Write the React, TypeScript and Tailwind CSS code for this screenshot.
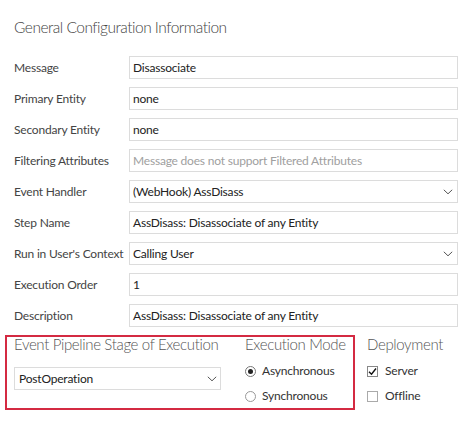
import React from "react";

const Chevron = () => (
  <svg width="10" height="6" viewBox="0 0 10 6" className="shrink-0">
    <path d="M0.8 0.8 L5 4.8 L9.2 0.8" fill="none" stroke="#555" strokeWidth="1" />
  </svg>
);

type Row = { label: string; value: string; select?: boolean; placeholder?: boolean };

const rows: Row[] = [
  { label: "Message", value: "Disassociate" },
  { label: "Primary Entity", value: "none" },
  { label: "Secondary Entity", value: "none" },
  { label: "Filtering Attributes", value: "Message does not support Filtered Attributes", placeholder: true },
  { label: "Event Handler", value: "(WebHook) AssDisass", select: true },
  { label: "Step Name", value: "AssDisass: Disassociate of any Entity" },
  { label: "Run in User's Context", value: "Calling User", select: true },
  { label: "Execution Order", value: "1" },
  { label: "Description", value: "AssDisass: Disassociate of any Entity" },
];

export default function App() {
  return (
    <div
      className="w-[474px] h-[424px] bg-white overflow-hidden text-[#333]"
      style={{ fontFamily: 'Lato, "Noto Sans", sans-serif' }}
    >
      <div className="pl-[14px] pt-[16px] h-[56px]">
        <div className="text-[15.5px] leading-[22px] font-light text-[#444] tracking-[-0.5px]">
          General Configuration Information
        </div>
      </div>
      <div className="flex flex-col gap-[8px]">
        {rows.map((r) => (
          <div key={r.label} className="flex items-center h-[23px]">
            <div className="w-[129px] pl-[14px] text-[12px] tracking-[-0.2px] text-[#444] whitespace-nowrap">
              {r.label}
            </div>
            <div className="w-[329px] h-[23px] border border-[#dcdcdc] flex items-center justify-between pl-[3px] pr-[4px]">
              <span
                className={
                  "text-[12px] tracking-[-0.2px] whitespace-nowrap " +
                  (r.placeholder ? "text-[#a0a0a0]" : "text-[#222]")
                }
              >
                {r.value}
              </span>
              {r.select && <Chevron />}
            </div>
          </div>
        ))}
      </div>
      <div className="flex mt-[8px]">
        <div className="ml-[5px] w-[350px] h-[75px] border-2 border-[#d42a42] flex pl-[7px] gap-[24px]">
          <div className="flex flex-col w-[207px]">
            <div className="h-[20px] text-[15px] leading-[15px] font-light tracking-[-0.35px] text-[#555] whitespace-nowrap">
              Event Pipeline Stage of Execution
            </div>
            <div className="mt-[10px] h-[23px] border border-[#dcdcdc] flex items-center justify-between pl-[4px] pr-[3px]">
              <span className="text-[12px] tracking-[-0.2px] text-[#222]">PostOperation</span>
              <Chevron />
            </div>
          </div>
          <div className="flex flex-col">
            <div className="h-[20px] text-[15px] leading-[15px] font-light tracking-[-0.35px] text-[#555] whitespace-nowrap">
              Execution Mode
            </div>
            <div className="mt-[7px] flex items-center gap-[6px] h-[14px]">
              <span className="w-[11px] h-[11px] rounded-full border border-[#777] flex items-center justify-center">
                <span className="w-[5px] h-[5px] rounded-full bg-[#222]" />
              </span>
              <span className="text-[12px] tracking-[-0.2px] text-[#333]">Asynchronous</span>
            </div>
            <div className="mt-[11px] flex items-center gap-[6px] h-[14px]">
              <span className="w-[11px] h-[11px] rounded-full border border-[#999]" />
              <span className="text-[12px] tracking-[-0.2px] text-[#333]">Synchronous</span>
            </div>
          </div>
        </div>
        <div className="ml-[12px] flex flex-col pt-[2px]">
          <div className="h-[20px] text-[15px] leading-[15px] font-light tracking-[-0.35px] text-[#555] whitespace-nowrap">
            Deployment
          </div>
          <div className="mt-[7px] flex items-center gap-[7px] h-[14px]">
            <span className="w-[11px] h-[11px] border border-[#888] flex items-center justify-center">
              <svg width="9" height="9" viewBox="0 0 9 9">
                <path d="M1 4.8 L3.5 7.2 L8 1.5" fill="none" stroke="#111" strokeWidth="1.4" />
              </svg>
            </span>
            <span className="text-[12px] tracking-[-0.2px] text-[#333]">Server</span>
          </div>
          <div className="mt-[11px] flex items-center gap-[7px] h-[14px]">
            <span className="w-[11px] h-[11px] border border-[#aaa]" />
            <span className="text-[12px] tracking-[-0.2px] text-[#333]">Offline</span>
          </div>
        </div>
      </div>
    </div>
  );
}
